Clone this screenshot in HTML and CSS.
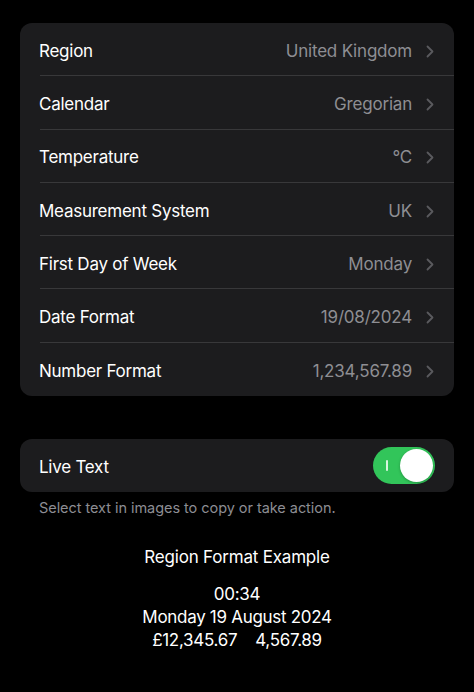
FILE: index.html
```html
<!DOCTYPE html>
<html lang="en">
<head>
<meta charset="utf-8">
<title>Language &amp; Region</title>
<link rel="stylesheet" href="styles.css">
</head>
<body>
<div class="card">
  <div class="row"><div class="inner"><span class="label">Region</span><span class="value">United Kingdom</span><svg class="chev" viewBox="0 0 8 13"><path d="M1.5 1.5 L6.5 6.5 L1.5 11.5"/></svg></div></div>
  <div class="row"><div class="inner"><span class="label">Calendar</span><span class="value">Gregorian</span><svg class="chev" viewBox="0 0 8 13"><path d="M1.5 1.5 L6.5 6.5 L1.5 11.5"/></svg></div></div>
  <div class="row"><div class="inner"><span class="label">Temperature</span><span class="value">°C</span><svg class="chev" viewBox="0 0 8 13"><path d="M1.5 1.5 L6.5 6.5 L1.5 11.5"/></svg></div></div>
  <div class="row"><div class="inner"><span class="label">Measurement System</span><span class="value">UK</span><svg class="chev" viewBox="0 0 8 13"><path d="M1.5 1.5 L6.5 6.5 L1.5 11.5"/></svg></div></div>
  <div class="row"><div class="inner"><span class="label">First Day of Week</span><span class="value">Monday</span><svg class="chev" viewBox="0 0 8 13"><path d="M1.5 1.5 L6.5 6.5 L1.5 11.5"/></svg></div></div>
  <div class="row"><div class="inner"><span class="label">Date Format</span><span class="value">19/08/2024</span><svg class="chev" viewBox="0 0 8 13"><path d="M1.5 1.5 L6.5 6.5 L1.5 11.5"/></svg></div></div>
  <div class="row"><div class="inner"><span class="label">Number Format</span><span class="value">1,234,567.89</span><svg class="chev" viewBox="0 0 8 13"><path d="M1.5 1.5 L6.5 6.5 L1.5 11.5"/></svg></div></div>
</div>

<div class="card card-live">
  <div class="row"><div class="inner"><span class="label">Live Text</span>
    <div class="toggle"><span class="on-mark"></span><span class="knob"></span></div>
  </div></div>
</div>
<p class="footnote">Select text in images to copy or take action.</p>

<div class="example">
  <div class="ex-title">Region Format Example</div>
  <div class="ex-line">00:34</div>
  <div class="ex-line">Monday 19 August 2024</div>
  <div class="ex-line">£12,345.67&nbsp;&nbsp;&nbsp;&nbsp;4,567.89</div>
</div>
</body>
</html>
```
FILE: styles.css
```css
html, body {
  margin: 0;
  padding: 0;
  background: #000;
}
body {
  font-family: Inter, "Noto Sans", "Liberation Sans", sans-serif;
  color: #fff;
  padding-top: 23px;
}
.card {
  margin: 0 20px;
  background: #1c1c1e;
  border-radius: 12px;
  overflow: hidden;
}
.row {
  padding-left: 20px;
}
.inner {
  height: 53.3px;
  display: flex;
  align-items: center;
  padding-right: 20px;
  box-sizing: border-box;
  border-bottom: 1px solid #38383a;
}
.row:last-child .inner {
  border-bottom: none;
}
.label {
  font-size: 17px;
  flex: 1;
  margin-left: -1px;
  letter-spacing: -0.25px;
  padding-top: 3px;
}
.value {
  font-size: 17px;
  color: #8e8e93;
  letter-spacing: -0.2px;
  padding-top: 3px;
}
.chev {
  width: 8px;
  height: 13px;
  margin-left: 14px;
  margin-top: 4px;
  fill: none;
  stroke: #5a5a5e;
  stroke-width: 1.8;
  stroke-linecap: round;
  stroke-linejoin: round;
}
.card-live {
  margin-top: 43px;
}
.card-live .inner {
  height: 53px;
  padding-right: 19px;
}
.toggle {
  width: 62px;
  height: 37px;
  border-radius: 19px;
  background: #32c55a;
  display: flex;
  align-items: center;
  justify-content: space-between;
  padding: 0 2px 0 13px;
  box-sizing: border-box;
}
.on-mark {
  width: 1.5px;
  height: 11px;
  background: #d8f5df;
  border-radius: 1px;
}
.knob {
  width: 33px;
  height: 33px;
  border-radius: 50%;
  background: #fff;
  box-shadow: 0 1px 3px rgba(0,0,0,0.25);
}
.footnote {
  margin: 7px 0 0 39px;
  font-size: 14.5px;
  color: #8d8d93;
  line-height: 18px;
  letter-spacing: -0.05px;
}
.example {
  text-align: center;
  margin-top: 29px;
}
.ex-title {
  font-size: 17px;
  line-height: 23px;
  margin-bottom: 14px;
  letter-spacing: -0.2px;
}
.ex-line {
  font-size: 17px;
  line-height: 23px;
  letter-spacing: -0.3px;
}
```
